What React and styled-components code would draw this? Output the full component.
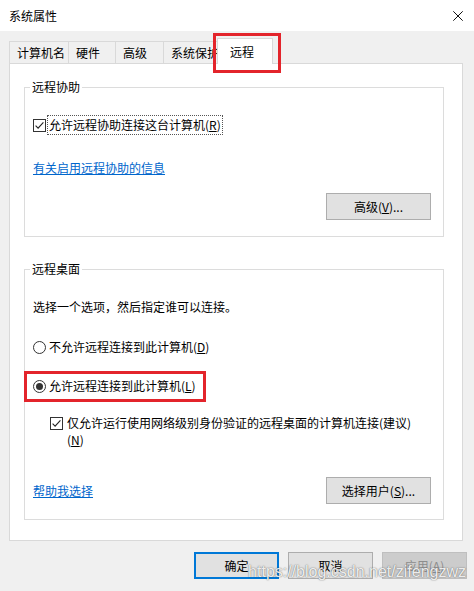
import React from 'react'
import styled, { createGlobalStyle } from 'styled-components'

const GlobalStyle = createGlobalStyle`
  html, body {
    margin: 0;
    padding: 0;
    background: #f0f0f0;
  }
  body {
    font-family: "Noto Sans CJK SC", "Microsoft YaHei", sans-serif;
    font-size: 12px;
    color: #000;
  }
  * {
    box-sizing: border-box;
  }
`

const Window = styled.div`
  position: relative;
  width: 474px;
  height: 591px;
  display: flex;
  flex-direction: column;
  background: #f0f0f0;
  overflow: hidden;
`

const TitleBar = styled.div`
  height: 31px;
  flex-shrink: 0;
  background: #fff;
  display: flex;
  align-items: center;
  justify-content: space-between;
  padding: 0 11px 0 9px;
`

const Title = styled.span`
  font-size: 12px;
  line-height: 16px;
`

const CloseIcon = styled.svg`
  width: 10px;
  height: 10px;
  display: block;
`

const Body = styled.div`
  display: flex;
  flex-direction: column;
  padding: 7px 11px 0 9px;
`

const TabRow = styled.div`
  display: flex;
  align-items: flex-end;
  height: 25px;
`

const Tab = styled.div`
  position: relative;
  width: ${({ $w }) => $w}px;
  height: ${({ $active }) => ($active ? 26 : 22)}px;
  margin-left: ${({ $active }) => ($active ? -5 : 0)}px;
  margin-right: ${({ $active }) => ($active ? 0 : -1)}px;
  margin-bottom: ${({ $active }) => ($active ? -1 : 0)}px;
  padding-left: ${({ $active }) => ($active ? 12 : 7)}px;
  z-index: ${({ $active }) => ($active ? 2 : 0)};
  display: flex;
  align-items: center;
  background: ${({ $active }) => ($active ? '#fff' : '#f0f0f0')};
  border: 1px solid #d9d9d9;
  border-bottom: none;
  white-space: nowrap;
  overflow: hidden;
  line-height: 16px;

  ${({ $marked }) =>
    $marked &&
    `
    overflow: visible;
    &::after {
      content: '';
      position: absolute;
      top: -6px;
      left: -5px;
      right: -9px;
      bottom: -9px;
      border: 3px solid #e3242b;
      pointer-events: none;
    }
  `}
`

const Panel = styled.div`
  background: #fff;
  border: 1px solid #d9d9d9;
  padding: 15px 18px 20px 14px;
`

const Group = styled.fieldset`
  margin: ${({ $top }) => $top || 0}px 0 0 0;
  min-width: 0;
  border: 1px solid #dcdcdc;
  padding: 0 12px ${({ $bottom }) => $bottom}px 8px;
`

const Legend = styled.legend`
  padding: 0 2px;
  margin-left: -3px;
  font-size: 12px;
  line-height: 16px;
`

const OptionRow = styled.label`
  position: relative;
  display: ${({ $wrap }) => ($wrap ? 'flex' : 'inline-flex')};
  align-items: ${({ $wrap }) => ($wrap ? 'flex-start' : 'center')};
  margin-top: ${({ $top }) => $top}px;
  padding-left: ${({ $indent }) => $indent || 0}px;
  min-height: 20px;
  line-height: ${({ $wrap }) => ($wrap ? 17 : 16)}px;
  gap: ${({ $wrap }) => ($wrap ? 4 : 3)}px;

  ${({ $marked }) =>
    $marked &&
    `
    &::after {
      content: '';
      position: absolute;
      top: -5px;
      left: -9px;
      right: -10px;
      bottom: -6px;
      border: 3px solid #e3242b;
      pointer-events: none;
    }
  `}
`

const Wrap = styled.div`
  display: block;
`

const OptionText = styled.span`
  ${({ $focus }) =>
    $focus &&
    `
    outline: 1px dotted #555;
    outline-offset: 1px;
  `}
`

const Mark = styled.svg`
  width: 13px;
  height: 13px;
  flex-shrink: 0;
  display: block;
  margin-top: ${({ $shift }) => $shift || 0}px;
`

const Description = styled.div`
  margin-top: ${({ $top }) => $top}px;
  line-height: 16px;
`

const Link = styled.a`
  display: ${({ $top }) => ($top !== undefined ? 'block' : 'inline')};
  width: fit-content;
  margin-top: ${({ $top }) => $top || 0}px;
  color: #0066cc;
  text-decoration: underline;
  line-height: 16px;
  cursor: pointer;
`

const ButtonRow = styled.div`
  display: flex;
  align-items: center;
  justify-content: ${({ $split }) => ($split ? 'space-between' : 'flex-end')};
  margin-top: ${({ $top }) => $top}px;
`

const Button = styled.button`
  width: ${({ $w }) => $w}px;
  height: 27px;
  padding: 0;
  font-family: inherit;
  font-size: 12px;
  line-height: 16px;
  color: ${({ $disabled }) => ($disabled ? '#8d8d8d' : '#000')};
  background: ${({ $disabled }) => ($disabled ? '#cccccc' : '#e1e1e1')};
  border: ${({ $default, $disabled }) =>
    $default ? '2px solid #0078d7' : $disabled ? '1px solid #bfbfbf' : '1px solid #adadad'};
`

const Footer = styled.div`
  display: flex;
  justify-content: flex-end;
  gap: 9px;
  margin-top: 11px;
  margin-right: -4px;
`

const Watermark = styled.div`
  position: absolute;
  right: 8px;
  bottom: 11px;
  font-family: "Liberation Sans", Arial, sans-serif;
  font-size: 16px;
  line-height: 16px;
  color: rgba(255, 255, 255, 0.9);
  text-shadow: 0 0 1px rgba(60, 60, 60, 0.7), 0 0 2px rgba(60, 60, 60, 0.35);
  pointer-events: none;
`

const Checkbox = ({ shift }) => (
  <Mark $shift={shift} viewBox="0 0 13 13">
    <rect x="0.5" y="0.5" width="12" height="12" fill="#fff" stroke="#333" />
    <path d="M2.6 6.6 L5.1 9.2 L10.4 3.4" fill="none" stroke="#222" strokeWidth="1.1" />
  </Mark>
)

const Radio = ({ checked }) => (
  <Mark viewBox="0 0 13 13">
    <circle cx="6.5" cy="6.5" r="6" fill="#fff" stroke="#333" />
    {checked && <circle cx="6.5" cy="6.5" r="3.5" fill="#333" />}
  </Mark>
)

const tabs = [
  { label: '计算机名', w: 60 },
  { label: '硬件', w: 48 },
  { label: '高级', w: 49 },
  { label: '系统保护', w: 60 },
  { label: '远程', w: 56, active: true },
]

export default function App() {
  return (
    <>
      <GlobalStyle />
      <Window>
        <TitleBar>
          <Title>系统属性</Title>
          <CloseIcon viewBox="0 0 10 10">
            <path d="M0.3 0.3 L9.7 9.7 M9.7 0.3 L0.3 9.7" stroke="#111" strokeWidth="1" />
          </CloseIcon>
        </TitleBar>

        <Body>
          <TabRow>
            {tabs.map((t) => (
              <Tab key={t.label} $w={t.w} $active={t.active} $marked={t.active}>
                {t.label}
              </Tab>
            ))}
          </TabRow>

          <Panel>
            <Group $bottom={16}>
              <Legend>远程协助</Legend>
              <OptionRow $top={20}>
                <Checkbox />
                <OptionText $focus>
                  允许远程协助连接这台计算机(<u>R</u>)
                </OptionText>
              </OptionRow>
              <Link $top={25}>有关启用远程协助的信息</Link>
              <ButtonRow $top={17}>
                <Button $w={105}>
                  高级(<u>V</u>)...
                </Button>
              </ButtonRow>
            </Group>

            <Group $top={24} $bottom={15}>
              <Legend>远程桌面</Legend>
              <Description $top={22}>选择一个选项，然后指定谁可以连接。</Description>
              <Wrap>
                <OptionRow $top={22}>
                  <Radio />
                  <OptionText>
                    不允许远程连接到此计算机(<u>D</u>)
                  </OptionText>
                </OptionRow>
              </Wrap>
              <Wrap>
                <OptionRow $top={19} $marked>
                  <Radio checked />
                  <OptionText>
                    允许远程连接到此计算机(<u>L</u>)
                  </OptionText>
                </OptionRow>
              </Wrap>
              <OptionRow $top={18} $indent={17} $wrap>
                <Checkbox shift={3} />
                <OptionText>
                  仅允许运行使用网络级别身份验证的远程桌面的计算机连接(建议)
                  <br />
                  (<u>N</u>)
                </OptionText>
              </OptionRow>
              <ButtonRow $top={29} $split>
                <Link>帮助我选择</Link>
                <Button $w={105}>
                  选择用户(<u>S</u>)...
                </Button>
              </ButtonRow>
            </Group>
          </Panel>

          <Footer>
            <Button $w={85} $default>确定</Button>
            <Button $w={85}>取消</Button>
            <Button $w={85} $disabled>
              应用(<u>A</u>)
            </Button>
          </Footer>
        </Body>

        <Watermark>https://blog.csdn.net/zifengzwz</Watermark>
      </Window>
    </>
  )
}
